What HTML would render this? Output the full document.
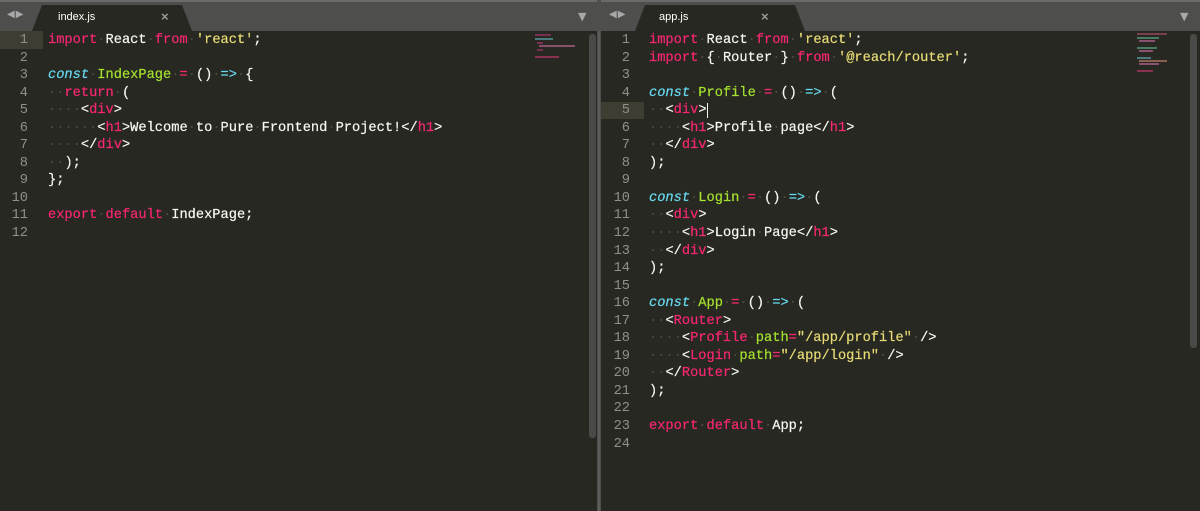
<!DOCTYPE html>
<html><head><meta charset="utf-8"><style>
*{margin:0;padding:0;box-sizing:border-box}
body{width:1200px;height:511px;background:#272822;overflow:hidden;position:relative;font-family:"Liberation Mono",monospace}
.bar{position:absolute;top:0;height:31px;background:#4e4e4c;border-top:2px solid #6a6a68}
.tab{position:absolute;top:5px;height:26px;background:#272822;clip-path:polygon(10px 0,calc(100% - 10px) 0,100% 100%,0 100%)}
.tab span{position:absolute;top:6px;font:11px "Liberation Sans",sans-serif;color:#fff}
.tab b{position:absolute;top:4px;font:bold 13px "Liberation Sans",sans-serif;color:#9a9a9a}
.arr{position:absolute;top:9px;color:#a8a8a8;font-size:10px;font-family:"DejaVu Sans",sans-serif;letter-spacing:1px}
.code{position:absolute;top:32px;font-size:13.7px;line-height:17.55px;white-space:pre;color:#f8f8f2;-webkit-text-stroke:0.2px}
.gut{position:absolute;top:32px;font-size:13.7px;line-height:17.55px;color:#8f908a;text-align:right;white-space:pre}
.hl{position:absolute;height:17.55px;background:#3e3d32;width:43px}
.k{color:#f92672}.s{color:#e6db74}.g{color:#a6e22e}.c{color:#66d9ef;font-style:italic}.c2{color:#66d9ef}
i{font-style:normal;color:#4b4b42;-webkit-text-stroke:0}
.sb{position:absolute;width:7px;background:#4a4a48;border-radius:3px}
.mm{position:absolute;height:2px}
</style></head><body>
<div class="bar" style="left:0;width:597px"></div>
<div class="arr" style="left:7px">◀▶</div>
<div class="tab" style="left:32px;width:160px"><span style="left:26px">index.js</span><b style="left:129px">×</b></div>
<div class="arr" style="left:578px;top:10px;font-size:11px">▼</div>
<div class="hl" style="left:0;top:31px"></div>
<div class="gut" style="left:0;width:28px">1
2
3
4
5
6
7
8
9
10
11
12</div>
<div class="code" style="left:48px"><span class="k">import</span><i>·</i>React<i>·</i><span class="k">from</span><i>·</i><span class="s">'react'</span>;

<span class="c">const</span><i>·</i><span class="g">IndexPage</span><i>·</i><span class="k">=</span><i>·</i>()<i>·</i><span class="c2">=&gt;</span><i>·</i>{
<i>··</i><span class="k">return</span><i>·</i>(
<i>····</i>&lt;<span class="k">div</span>&gt;
<i>······</i>&lt;<span class="k">h1</span>&gt;Welcome<i>·</i>to<i>·</i>Pure<i>·</i>Frontend<i>·</i>Project!&lt;/<span class="k">h1</span>&gt;
<i>····</i>&lt;/<span class="k">div</span>&gt;
<i>··</i>);
};

<span class="k">export</span><i>·</i><span class="k">default</span><i>·</i>IndexPage;
</div>
<div class="mm" style="left:535px;top:34px;width:16px;background:#7a3050"></div>
<div class="mm" style="left:535px;top:38px;width:18px;background:#4a7a80"></div>
<div class="mm" style="left:537px;top:42px;width:6px;background:#7a3050"></div>
<div class="mm" style="left:539px;top:45px;width:36px;background:#8a5070"></div>
<div class="mm" style="left:537px;top:49px;width:6px;background:#7a3050"></div>
<div class="mm" style="left:535px;top:56px;width:24px;background:#8a3050"></div>
<div class="sb" style="left:589px;top:34px;height:404px"></div>
<div style="position:absolute;left:597px;top:0;width:4px;height:511px;background:#4e4e4c"></div>
<div style="position:absolute;left:598px;top:31px;width:2px;height:480px;background:#5c5c5a"></div>
<div class="bar" style="left:601px;width:599px"></div>
<div class="arr" style="left:609px">◀▶</div>
<div class="tab" style="left:635px;width:170px"><span style="left:24px">app.js</span><b style="left:126px">×</b></div>
<div class="arr" style="left:1180px;top:10px;font-size:11px">▼</div>
<div class="hl" style="left:601px;top:101.7px"></div>
<div class="gut" style="left:601px;width:29px">1
2
3
4
5
6
7
8
9
10
11
12
13
14
15
16
17
18
19
20
21
22
23
24</div>
<div class="code" style="left:649px"><span class="k">import</span><i>·</i>React<i>·</i><span class="k">from</span><i>·</i><span class="s">'react'</span>;
<span class="k">import</span><i>·</i>{<i>·</i>Router<i>·</i>}<i>·</i><span class="k">from</span><i>·</i><span class="s">'@reach/router'</span>;

<span class="c">const</span><i>·</i><span class="g">Profile</span><i>·</i><span class="k">=</span><i>·</i>()<i>·</i><span class="c2">=&gt;</span><i>·</i>(
<i>··</i>&lt;<span class="k">div</span>&gt;<span style="border-left:1.5px solid #f8f8f2"></span>
<i>····</i>&lt;<span class="k">h1</span>&gt;Profile<i>·</i>page&lt;/<span class="k">h1</span>&gt;
<i>··</i>&lt;/<span class="k">div</span>&gt;
);

<span class="c">const</span><i>·</i><span class="g">Login</span><i>·</i><span class="k">=</span><i>·</i>()<i>·</i><span class="c2">=&gt;</span><i>·</i>(
<i>··</i>&lt;<span class="k">div</span>&gt;
<i>····</i>&lt;<span class="k">h1</span>&gt;Login<i>·</i>Page&lt;/<span class="k">h1</span>&gt;
<i>··</i>&lt;/<span class="k">div</span>&gt;
);

<span class="c">const</span><i>·</i><span class="g">App</span><i>·</i><span class="k">=</span><i>·</i>()<i>·</i><span class="c2">=&gt;</span><i>·</i>(
<i>··</i>&lt;<span class="k">Router</span>&gt;
<i>····</i>&lt;<span class="k">Profile</span><i>·</i><span class="g">path</span><span class="k">=</span><span class="s">"/app/profile"</span><i>·</i>/&gt;
<i>····</i>&lt;<span class="k">Login</span><i>·</i><span class="g">path</span><span class="k">=</span><span class="s">"/app/login"</span><i>·</i>/&gt;
<i>··</i>&lt;/<span class="k">Router</span>&gt;
);

<span class="k">export</span><i>·</i><span class="k">default</span><i>·</i>App;
</div>
<div class="mm" style="left:1137px;top:33px;width:30px;background:#7a4050"></div>
<div class="mm" style="left:1137px;top:37px;width:22px;background:#4a7a60"></div>
<div class="mm" style="left:1139px;top:40px;width:16px;background:#8a5070"></div>
<div class="mm" style="left:1137px;top:47px;width:20px;background:#4a7a60"></div>
<div class="mm" style="left:1139px;top:50px;width:14px;background:#8a5070"></div>
<div class="mm" style="left:1137px;top:57px;width:14px;background:#4a7a80"></div>
<div class="mm" style="left:1139px;top:60px;width:28px;background:#8a6050"></div>
<div class="mm" style="left:1139px;top:63px;width:20px;background:#8a5070"></div>
<div class="mm" style="left:1137px;top:70px;width:16px;background:#8a3050"></div>
<div class="sb" style="left:1190px;top:34px;height:314px"></div>
</body></html>
